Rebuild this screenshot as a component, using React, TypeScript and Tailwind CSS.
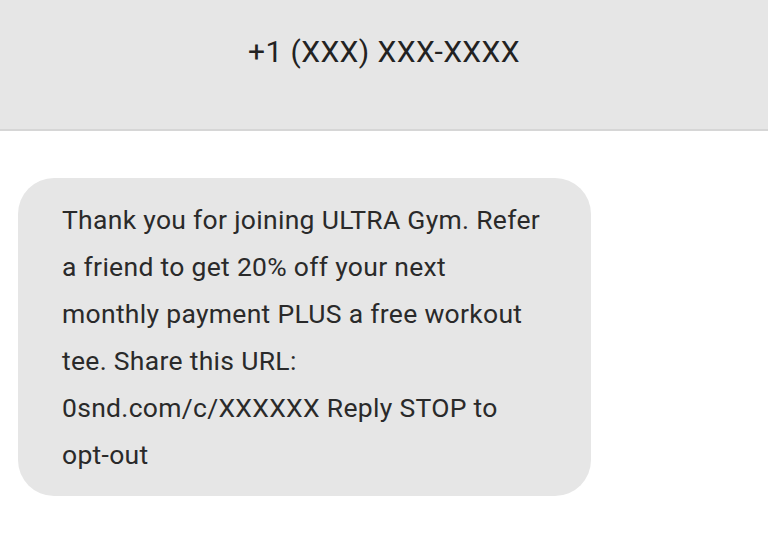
import React from 'react';

const lines = [
  'Thank you for joining ULTRA Gym. Refer',
  'a friend to get 20% off your next',
  'monthly payment PLUS a free workout',
  'tee. Share this URL:',
  '0snd.com/c/XXXXXX Reply STOP to',
  'opt-out',
];

export default function App() {
  return (
    <div className="w-[768px] h-[539px] bg-white overflow-hidden font-['Roboto',sans-serif]">
      {/* Header */}
      <header className="h-[131px] bg-[#e6e6e6] border-b-2 border-[#d6d6d6] flex items-start justify-center pt-[31px]">
        <h1 className="text-[30px] leading-[42px] text-[#222] tracking-[0.4px]">+1 (XXX) XXX-XXXX</h1>
      </header>

      {/* Message */}
      <div className="px-[18px] pt-[47px]">
        <div className="w-[573px] bg-[#e6e6e6] rounded-[36px] pl-[44px] pr-[20px] py-[18px]">
          <p className="text-[26.5px] leading-[47px] text-[#2a2a2a] tracking-[0.3px] whitespace-nowrap">
            {lines.map((l) => (
              <span key={l} className="block">{l}</span>
            ))}
          </p>
        </div>
      </div>
    </div>
  );
}
